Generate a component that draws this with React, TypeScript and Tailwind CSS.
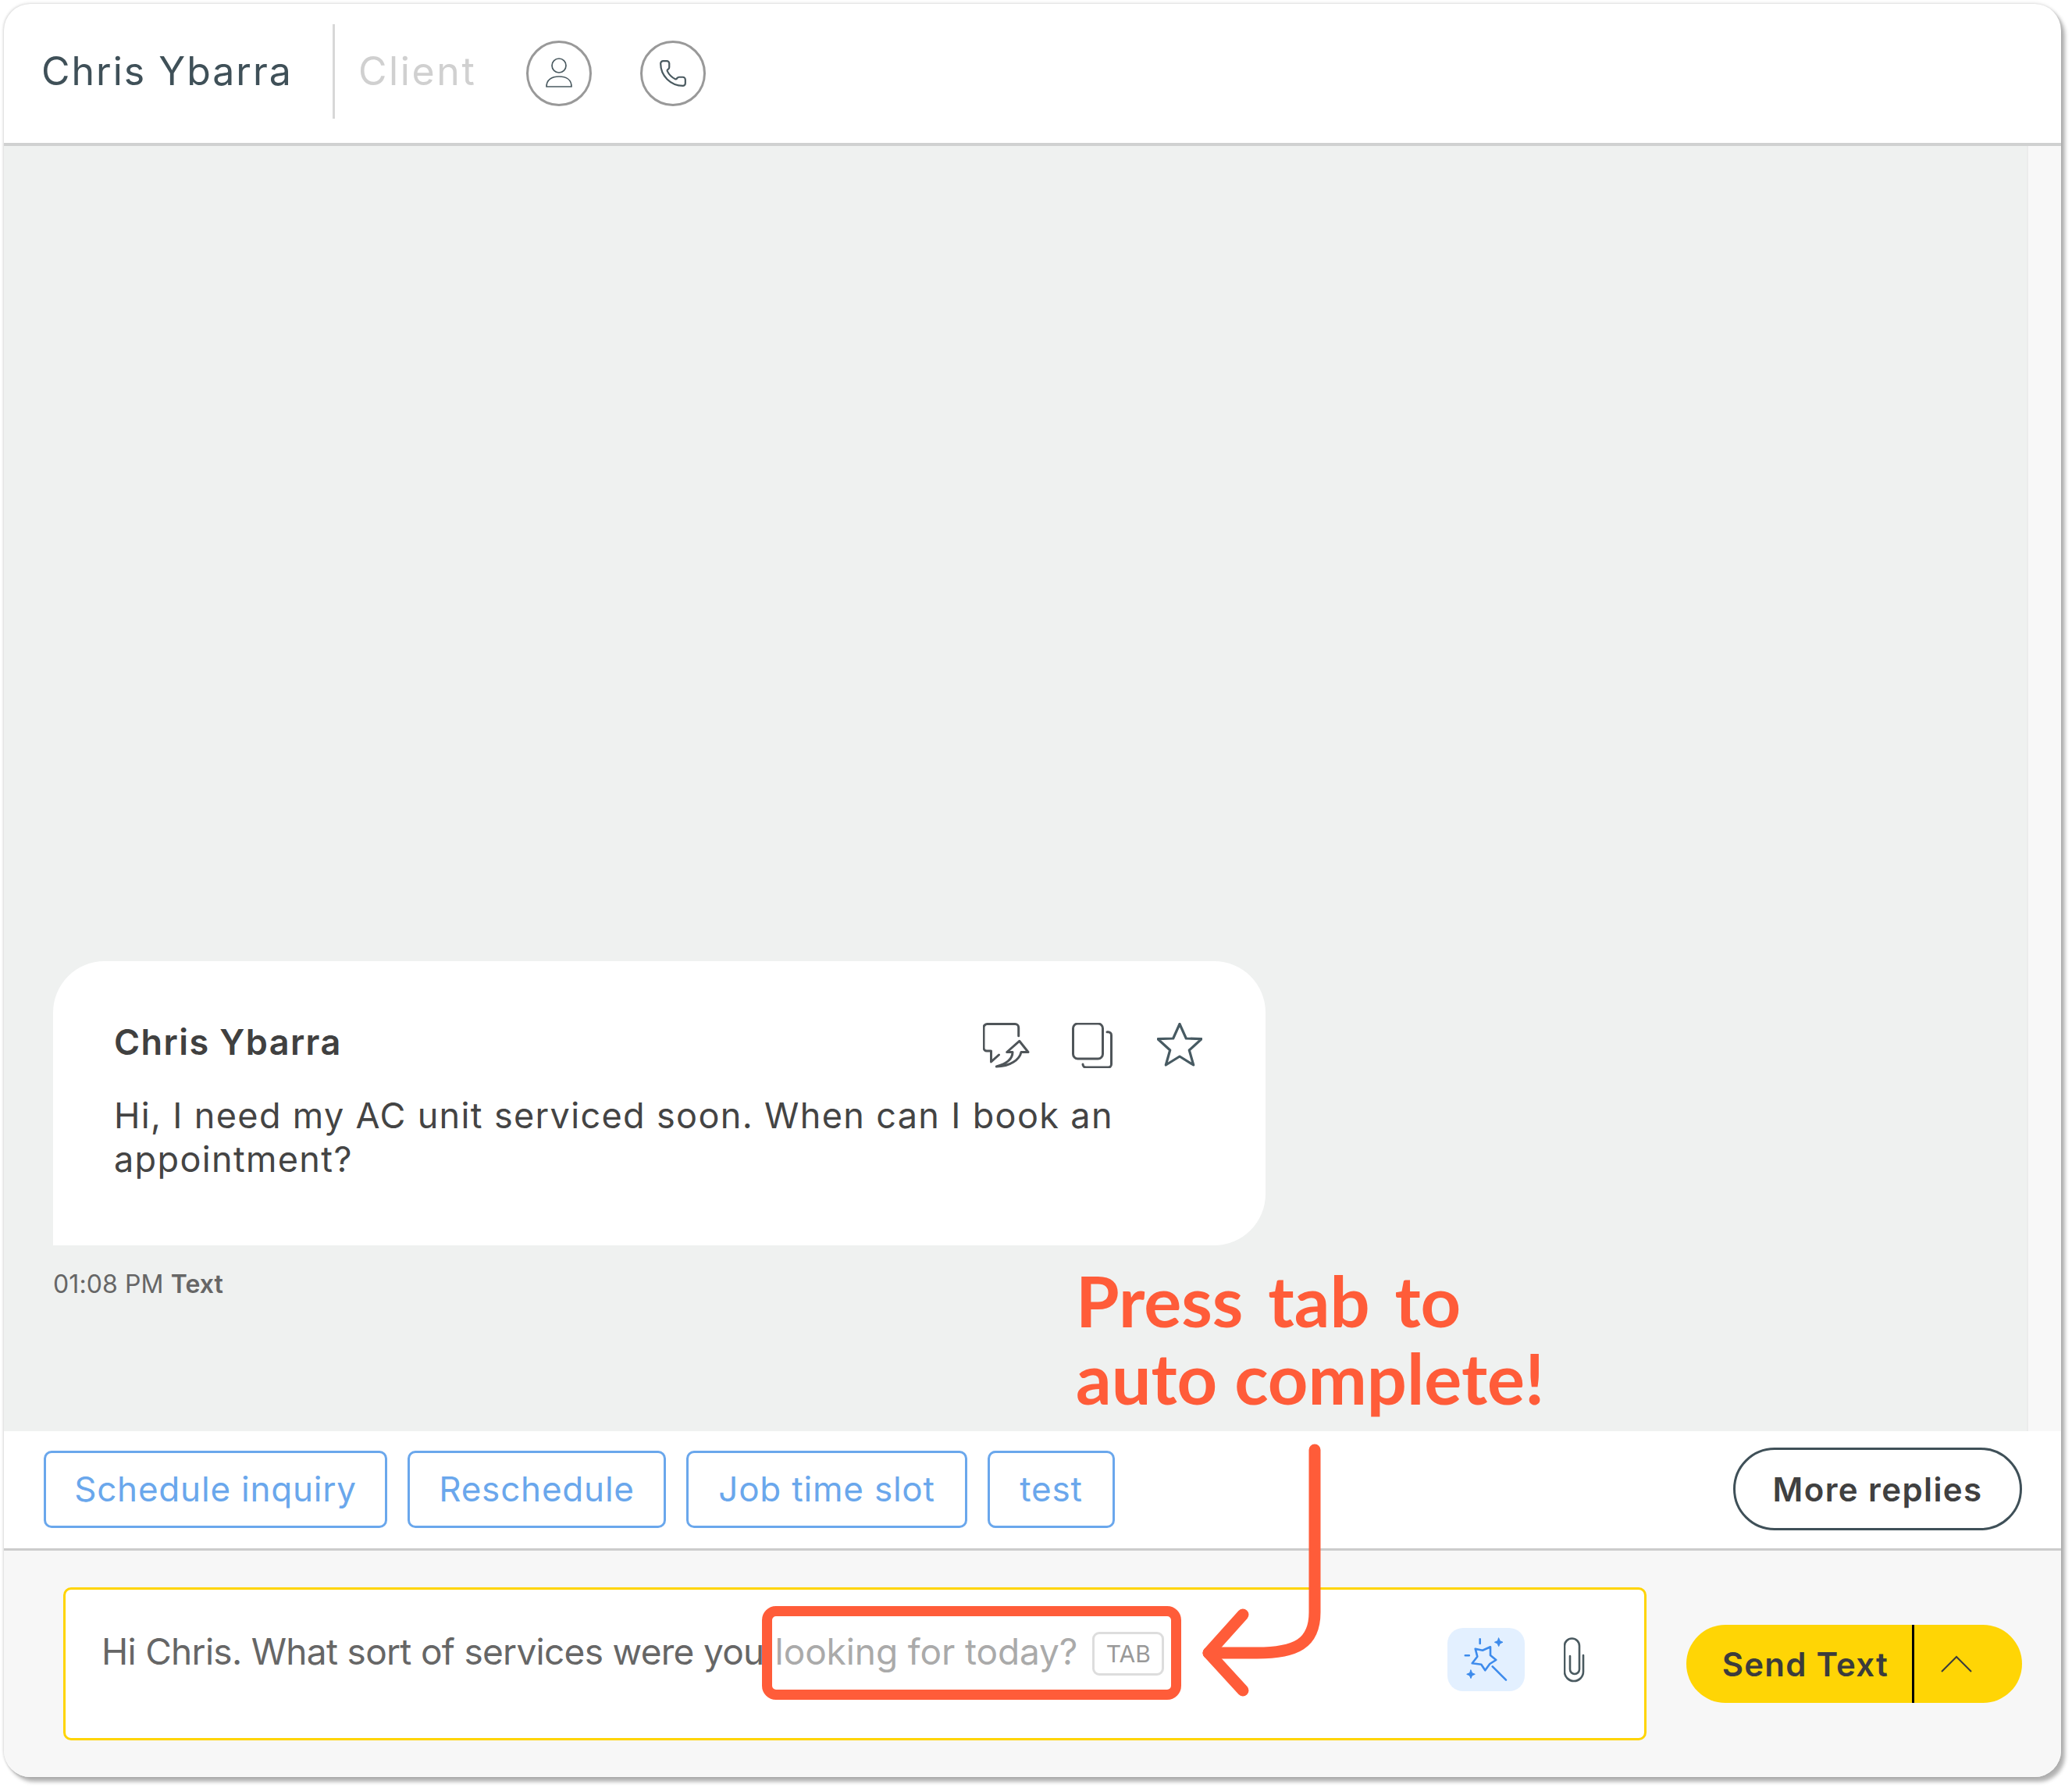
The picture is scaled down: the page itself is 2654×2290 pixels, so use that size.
import React from 'react';
import { Phone } from 'lucide-react';

const quickReplies = [
  { label: 'Schedule inquiry', width: 'w-[440px]' },
  { label: 'Reschedule', width: 'w-[331px]' },
  { label: 'Job time slot', width: 'w-[360px]' },
  { label: 'test', width: 'w-[163px]' },
];

const UserIcon = () => (
  <svg width="38" height="40" viewBox="0 0 38 40" fill="none" stroke="#4a5a60" strokeWidth="1.7">
    <circle cx="19" cy="10" r="9" />
    <path d="M3 37c0-9 7-13 16-13s16 4 16 13z" strokeLinejoin="round" />
  </svg>
);

const ReplyIcon = () => (
  <svg width="60" height="58" viewBox="0 0 60 58" fill="none" stroke="#4f5559" strokeWidth="3" strokeLinecap="round" strokeLinejoin="round">
    <path d="M45.7 16.7V6a4.5 4.5 0 0 0-4.5-4.5H5.5A4.5 4.5 0 0 0 1 6v26a4 4 0 0 0 4 4h5.5v14l10-9" />
    <path d="M46.7 23.3 58 37.5h-9C47 47 35 56 17.3 56 28 53 38 47 38 37.5h-7.3z" />
  </svg>
);

const CopyIcon = () => (
  <svg width="53" height="58" viewBox="0 0 53 58" fill="none" stroke="#4f5559" strokeWidth="3" strokeLinecap="round" strokeLinejoin="round">
    <rect x="1.5" y="1" width="38" height="45" rx="6" />
    <path d="M45 11.7h1.5a4 4 0 0 1 4 4V53a4 4 0 0 1-4 4H18a4 4 0 0 1-4-4" />
  </svg>
);

const StarIcon = () => (
  <svg width="58" height="56" viewBox="0 0 58 56" fill="none" stroke="#475a62" strokeWidth="3.2" strokeLinejoin="round">
    <path d="M29 1.5 37.3 20l19.7.7L41.3 35l5.4 19L29 43 11.3 54l5.4-19L1 20.7 20.7 20z" />
  </svg>
);

const WandIcon = () => (
  <svg width="99" height="81" viewBox="0 0 99 81" fill="none" stroke="#3d8bec" strokeWidth="2.6" strokeLinecap="round" strokeLinejoin="round">
    <path d="M55 24.3 55 35 62.3 41 54.3 46 48.3 54.3 43.3 46.7 31.7 45.3 38.3 36.7 35.7 26.7 45 28.7z" />
    <path d="M57.7 49.3 75 66.7M41.7 14.3V20M22.8 35.3h5" />
    <path d="M65.7 13l1.6 3.7 3.7 1.6-3.7 1.6-1.6 3.7-1.6-3.7-3.7-1.6 3.7-1.6zM30 54l1.6 3.7 3.7 1.6-3.7 1.6L30 64.6l-1.6-3.7-3.7-1.6 3.7-1.6z" fill="#3d8bec" strokeWidth="1" />
  </svg>
);

const ClipIcon = () => (
  <svg width="27" height="58" viewBox="0 0 27 58" fill="none" stroke="#4a5a60" strokeWidth="2.6" strokeLinecap="round">
    <path d="M25 23v21a12 12 0 0 1-24 0V11a9.5 9.5 0 0 1 19 0v30a6 6 0 0 1-12 0V24" />
  </svg>
);

export default function App() {
  return (
    <div className="relative w-[2654px] h-[2290px] bg-white pl-[5px] pt-[5px] font-[Inter,sans-serif]">
      <div className="w-[2635px] h-[2271px] rounded-[34px] overflow-hidden flex flex-col bg-white shadow-[5px_6px_5px_rgba(0,0,0,0.3),0_-1px_4px_rgba(0,0,0,0.1),-1px_0_3px_rgba(0,0,0,0.1)]">
        {/* Header */}
        <div className="h-[182px] shrink-0 flex items-center border-b-4 border-[#d0d1d1] pl-[48px]">
          <span className="w-[373px] mb-[5px] text-[50px] text-[#3f5058] tracking-[2px]">Chris Ybarra</span>
          <div className="w-[3px] h-[121px] bg-[#d8d8d8] mb-[6px]" />
          <span className="ml-[30px] w-[215px] mb-[5px] text-[50px] text-[#d0d0d0] tracking-[2.6px]">Client</span>
          <div className="w-[84px] h-[84px] rounded-full border-[3px] border-[#999999] flex items-center justify-center">
            <UserIcon />
          </div>
          <div className="ml-[62px] w-[84px] h-[84px] rounded-full border-[3px] border-[#999999] flex items-center justify-center">
            <Phone size={38} strokeWidth={1.4} color="#4a5a60" />
          </div>
        </div>

        {/* Conversation */}
        <div className="flex-1 flex min-h-0">
          <div className="flex-1 bg-[#eff1f0] flex flex-col justify-end pl-[63px] pb-[168px]">
            <div className="w-[1553px] h-[364px] bg-white rounded-t-[66px] rounded-br-[66px] pl-[78px] pr-[78px] pt-[76px]">
              <div className="flex items-start justify-between">
                <span className="text-[45px] leading-[56px] font-semibold text-[#404040] tracking-[1.4px]">Chris Ybarra</span>
                <div className="flex items-start mt-[3px]">
                  <ReplyIcon />
                  <div className="ml-[54px]"><CopyIcon /></div>
                  <div className="ml-[56px] mr-[3px]"><StarIcon /></div>
                </div>
              </div>
              <p className="mt-[33px] text-[45px] leading-[56px] text-[#444444] tracking-[1.35px]">
                Hi, I need my AC unit serviced soon. When can I book an appointment?
              </p>
            </div>
            <div className="mt-[30px] text-[32px] leading-[40px] text-[#666666] tracking-[0.1px]">
              01:08 PM <span className="font-semibold">Text</span>
            </div>
          </div>
          <div className="w-[44px] bg-[#f8f8f8] border-l-2 border-[#ececec]" />
        </div>

        {/* Quick replies */}
        <div className="h-[153px] shrink-0 flex items-center border-b-[3px] border-[#cccccc] pl-[51px] pr-[50px] bg-white">
          <div className="flex gap-[26px] mt-[-2px]">
            {quickReplies.map((reply) => (
              <div
                key={reply.label}
                className={`${reply.width} h-[99px] rounded-[10px] border-[3px] border-[#6aa7ec] flex items-center justify-center text-[44px] text-[#6aa7ec] tracking-[0.8px]`}
              >
                {reply.label}
              </div>
            ))}
          </div>
          <div className="ml-auto w-[370px] h-[106px] mt-[-2px] rounded-full border-[3.5px] border-[#3f5058] flex items-center justify-center text-[42px] font-semibold text-[#404040] tracking-[1.4px]">
            More replies
          </div>
        </div>

        {/* Composer */}
        <div className="h-[290px] shrink-0 bg-[#f7f7f7] flex items-start pl-[76px] pt-[47px]">
          <div className="w-[2028px] h-[196px] bg-white rounded-[10px] border-[3px] border-[#ffd400] flex items-center pl-[46px] pr-[76px] pb-[32px]">
            <span className="text-[46px] text-[#666666] whitespace-nowrap tracking-[-0.7px]">Hi Chris. What sort of services were you</span>
            <span className="ml-[14px] text-[46px] text-[#aaaaaa] whitespace-nowrap tracking-[-0.1px]">looking for today?</span>
            <span className="ml-[19px] mt-[6px] w-[92px] h-[56px] rounded-[9px] border-[3px] border-[#dddddd] flex items-center justify-center text-[30px] text-[#999999]">TAB</span>
            <div className="ml-auto flex items-center mt-[20px]">
              <div className="w-[99px] h-[81px] rounded-[20px] bg-[#e3f0ff] flex items-center justify-center">
                <WandIcon />
              </div>
              <div className="ml-[50px] mt-[2px]"><ClipIcon /></div>
            </div>
          </div>
          <div className="ml-[51px] mt-[48px] w-[430px] h-[100px] rounded-full bg-[#ffd505] flex items-stretch">
            <div className="w-[289px] flex items-center justify-end pr-[30px] text-[42px] font-semibold text-[#3c3c3c] tracking-[1.2px]">
              Send Text
            </div>
            <div className="w-[3px] bg-black" />
            <div className="flex-1 flex items-center pl-[34px]">
              <svg width="40" height="22" viewBox="0 0 40 22" fill="none" stroke="#3c3c3c" strokeWidth="2">
                <path d="M1 21 20 2l19 19" />
              </svg>
            </div>
          </div>
        </div>
      </div>

      {/* Annotation over the composer */}
      <div className="absolute left-[1378px] top-[1616px] text-[90px] leading-[99px] font-bold text-[#ff5c39] font-[Lato,sans-serif] whitespace-nowrap">
        <span className="[word-spacing:10px]">Press tab to</span>
        <br />
        auto complete!
      </div>
      <div className="absolute left-[976px] top-[2057px] w-[537px] h-[120px] rounded-[18px] border-[13px] border-[#ff5c39]" />
      <svg className="absolute left-[1530px] top-[1840px]" width="170" height="345" viewBox="0 0 170 345" fill="none" stroke="#ff5c39" strokeWidth="15" strokeLinecap="round" strokeLinejoin="round">
        <path d="M154 17V225C154 265 130 277 80 277H18" />
        <path d="M62 228 18 277l44 48" />
      </svg>
    </div>
  );
}
